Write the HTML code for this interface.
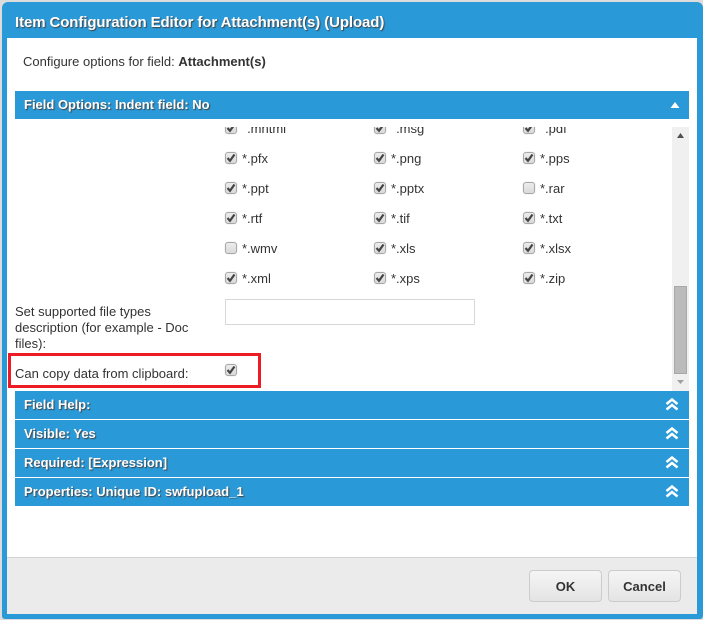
<!DOCTYPE html>
<html>
<head>
<meta charset="utf-8">
<style>
html,body{margin:0;padding:0;width:703px;height:620px;overflow:hidden;background:#dcdcdc;font-family:"Liberation Sans",Arial,sans-serif;color:#333;font-size:13px}
div,span,input{position:absolute;box-sizing:border-box}
#dlg{left:2px;top:2px;width:701px;height:617px;background:#2a99d8;border-radius:6px 6px 3px 3px}
#white{left:7px;top:38px;width:690px;height:519px;background:#fff}
#foot{left:7px;top:557px;width:690px;height:57px;background:#ebebeb;border-top:1px solid #d3d3d3}
.t{white-space:nowrap;line-height:16px}
.h{left:15px;width:674px;height:28px;background:#2a99d8}
.h span{left:9px;top:6px;color:#fff;font-weight:bold;font-size:13px;line-height:16px;white-space:nowrap;text-shadow:1px 1px 1px #444}
.h svg{position:absolute;left:650px;top:6px}
#title{left:15px;top:14px;color:#fff;font-weight:bold;font-size:15px;letter-spacing:-0.1px;line-height:18px;white-space:nowrap;text-shadow:1px 1px 1px #444}
#clip{left:15px;top:127px;width:657px;height:160px;overflow:hidden}
.c{width:12px;height:12px;border:1px solid #a8a8a8;border-radius:3px;background:linear-gradient(#ececec,#dadada);box-shadow:0 0 1px #c0c0c0}
.c svg{position:absolute;left:0;top:0}
.l{white-space:nowrap;line-height:16px;font-size:13px}
.l i{font-style:normal;color:transparent}
.b{width:73px;height:32px;top:570px;border:1px solid #ccc;border-radius:4px;background:linear-gradient(#f5f5f5,#e4e4e4);text-align:center;font-weight:bold;line-height:31px;font-size:13px;color:#333}
</style>
</head>
<body>
<div id="dlg"></div>
<div id="title">Item Configuration Editor for Attachment(s) (Upload)</div>
<div id="white"></div>
<div id="foot"></div>

<div class="t" style="left:23px;top:54px">Configure options for field: <b>Attachment(s)</b></div>

<div class="h" style="top:91px"><span>Field Options: Indent field: No</span>
<svg style="left:655px;top:11px" width="10" height="6"><path d="M5 0L9.500 6H0.500Z" fill="#fff"/></svg></div>

<div id="clip">
<div class="c" style="left:210px;top:-5px"><svg width="10" height="10"><path d="M1.500 5L4 7.800L8.500 1.500" fill="none" stroke="#444" stroke-width="2.200"/></svg></div><div class="l" style="left:227px;top:-6px"><i>*</i>.mhtml</div>
<div class="c" style="left:359px;top:-5px"><svg width="10" height="10"><path d="M1.500 5L4 7.800L8.500 1.500" fill="none" stroke="#444" stroke-width="2.200"/></svg></div><div class="l" style="left:376px;top:-6px"><i>*</i>.msg</div>
<div class="c" style="left:508px;top:-5px"><svg width="10" height="10"><path d="M1.500 5L4 7.800L8.500 1.500" fill="none" stroke="#444" stroke-width="2.200"/></svg></div><div class="l" style="left:525px;top:-6px"><i>*</i>.pdf</div>

<div class="c" style="left:210px;top:25px"><svg width="10" height="10"><path d="M1.500 5L4 7.800L8.500 1.500" fill="none" stroke="#444" stroke-width="2.200"/></svg></div><div class="l" style="left:227px;top:24px">*.pfx</div>
<div class="c" style="left:359px;top:25px"><svg width="10" height="10"><path d="M1.500 5L4 7.800L8.500 1.500" fill="none" stroke="#444" stroke-width="2.200"/></svg></div><div class="l" style="left:376px;top:24px">*.png</div>
<div class="c" style="left:508px;top:25px"><svg width="10" height="10"><path d="M1.500 5L4 7.800L8.500 1.500" fill="none" stroke="#444" stroke-width="2.200"/></svg></div><div class="l" style="left:525px;top:24px">*.pps</div>

<div class="c" style="left:210px;top:55px"><svg width="10" height="10"><path d="M1.500 5L4 7.800L8.500 1.500" fill="none" stroke="#444" stroke-width="2.200"/></svg></div><div class="l" style="left:227px;top:54px">*.ppt</div>
<div class="c" style="left:359px;top:55px"><svg width="10" height="10"><path d="M1.500 5L4 7.800L8.500 1.500" fill="none" stroke="#444" stroke-width="2.200"/></svg></div><div class="l" style="left:376px;top:54px">*.pptx</div>
<div class="c" style="left:508px;top:55px"></div><div class="l" style="left:525px;top:54px">*.rar</div>

<div class="c" style="left:210px;top:85px"><svg width="10" height="10"><path d="M1.500 5L4 7.800L8.500 1.500" fill="none" stroke="#444" stroke-width="2.200"/></svg></div><div class="l" style="left:227px;top:84px">*.rtf</div>
<div class="c" style="left:359px;top:85px"><svg width="10" height="10"><path d="M1.500 5L4 7.800L8.500 1.500" fill="none" stroke="#444" stroke-width="2.200"/></svg></div><div class="l" style="left:376px;top:84px">*.tif</div>
<div class="c" style="left:508px;top:85px"><svg width="10" height="10"><path d="M1.500 5L4 7.800L8.500 1.500" fill="none" stroke="#444" stroke-width="2.200"/></svg></div><div class="l" style="left:525px;top:84px">*.txt</div>

<div class="c" style="left:210px;top:115px"></div><div class="l" style="left:227px;top:114px">*.wmv</div>
<div class="c" style="left:359px;top:115px"><svg width="10" height="10"><path d="M1.500 5L4 7.800L8.500 1.500" fill="none" stroke="#444" stroke-width="2.200"/></svg></div><div class="l" style="left:376px;top:114px">*.xls</div>
<div class="c" style="left:508px;top:115px"><svg width="10" height="10"><path d="M1.500 5L4 7.800L8.500 1.500" fill="none" stroke="#444" stroke-width="2.200"/></svg></div><div class="l" style="left:525px;top:114px">*.xlsx</div>

<div class="c" style="left:210px;top:145px"><svg width="10" height="10"><path d="M1.500 5L4 7.800L8.500 1.500" fill="none" stroke="#444" stroke-width="2.200"/></svg></div><div class="l" style="left:227px;top:144px">*.xml</div>
<div class="c" style="left:359px;top:145px"><svg width="10" height="10"><path d="M1.500 5L4 7.800L8.500 1.500" fill="none" stroke="#444" stroke-width="2.200"/></svg></div><div class="l" style="left:376px;top:144px">*.xps</div>
<div class="c" style="left:508px;top:145px"><svg width="10" height="10"><path d="M1.500 5L4 7.800L8.500 1.500" fill="none" stroke="#444" stroke-width="2.200"/></svg></div><div class="l" style="left:525px;top:144px">*.zip</div>
</div>

<div class="l" style="left:15px;top:304px">Set supported file types</div>
<div class="l" style="left:15px;top:320px">description (for example - Doc</div>
<div class="l" style="left:15px;top:336px">files):</div>
<div style="left:225px;top:299px;width:250px;height:26px;border:1px solid #d8d8d8;background:#fff"></div>

<div class="l" style="left:15px;top:366px">Can copy data from clipboard:</div>
<div class="c" style="left:225px;top:364px"><svg width="10" height="10"><path d="M1.500 5L4 7.800L8.500 1.500" fill="none" stroke="#444" stroke-width="2.200"/></svg></div>
<div style="left:8px;top:353px;width:253px;height:35px;border:3px solid #ed1c24"></div>

<div style="left:672px;top:127px;width:17px;height:264px;background:#f0f0f0"></div>
<div style="left:674px;top:286px;width:13px;height:88px;background:#bbb;border:1px solid #a8a8a8"></div>
<svg style="position:absolute;left:677px;top:133px" width="7" height="5"><path d="M3.500 0L7 5H0Z" fill="#505050"/></svg>
<svg style="position:absolute;left:677px;top:380px" width="7" height="4"><path d="M0 0H7L3.500 4Z" fill="#a0a0a0"/></svg>

<div class="h" style="top:391px"><span>Field Help:</span>
<svg width="14" height="16"><path d="M1.500 7L7 2.500L12.500 7M1.500 12.500L7 8L12.500 12.500" fill="none" stroke="#fff" stroke-width="2.500"/></svg></div>
<div class="h" style="top:420px"><span>Visible: Yes</span>
<svg width="14" height="16"><path d="M1.500 7L7 2.500L12.500 7M1.500 12.500L7 8L12.500 12.500" fill="none" stroke="#fff" stroke-width="2.500"/></svg></div>
<div class="h" style="top:449px"><span>Required: [Expression]</span>
<svg width="14" height="16"><path d="M1.500 7L7 2.500L12.500 7M1.500 12.500L7 8L12.500 12.500" fill="none" stroke="#fff" stroke-width="2.500"/></svg></div>
<div class="h" style="top:478px"><span>Properties: Unique ID: swfupload_1</span>
<svg width="14" height="16"><path d="M1.500 7L7 2.500L12.500 7M1.500 12.500L7 8L12.500 12.500" fill="none" stroke="#fff" stroke-width="2.500"/></svg></div>

<div class="b" style="left:529px">OK</div>
<div class="b" style="left:608px">Cancel</div>
</body>
</html>
